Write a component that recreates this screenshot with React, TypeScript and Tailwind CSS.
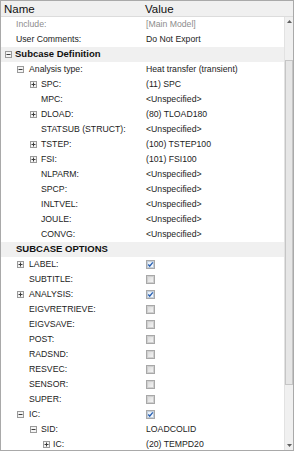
import React from "react";

type Row = {
  name: string;
  value?: string;
  level: number;
  box?: "+" | "-";
  group?: boolean;
  muted?: boolean;
  check?: boolean;
};

const rows: Row[] = [
  { name: "Include:", value: "[Main Model]", level: 0, muted: true },
  { name: "User Comments:", value: "Do Not Export", level: 0 },
  { name: "Subcase Definition", level: 0, box: "-", group: true },
  { name: "Analysis type:", value: "Heat transfer (transient)", level: 1, box: "-" },
  { name: "SPC:", value: "(11) SPC", level: 2, box: "+" },
  { name: "MPC:", value: "<Unspecified>", level: 2 },
  { name: "DLOAD:", value: "(80) TLOAD180", level: 2, box: "+" },
  { name: "STATSUB (STRUCT):", value: "<Unspecified>", level: 2 },
  { name: "TSTEP:", value: "(100) TSTEP100", level: 2, box: "+" },
  { name: "FSI:", value: "(101) FSI100", level: 2, box: "+" },
  { name: "NLPARM:", value: "<Unspecified>", level: 2 },
  { name: "SPCP:", value: "<Unspecified>", level: 2 },
  { name: "INLTVEL:", value: "<Unspecified>", level: 2 },
  { name: "JOULE:", value: "<Unspecified>", level: 2 },
  { name: "CONVG:", value: "<Unspecified>", level: 2 },
  { name: "SUBCASE OPTIONS", level: 0, group: true },
  { name: "LABEL:", level: 1, box: "+", check: true },
  { name: "SUBTITLE:", level: 1, check: false },
  { name: "ANALYSIS:", level: 1, box: "+", check: true },
  { name: "EIGVRETRIEVE:", level: 1, check: false },
  { name: "EIGVSAVE:", level: 1, check: false },
  { name: "POST:", level: 1, check: false },
  { name: "RADSND:", level: 1, check: false },
  { name: "RESVEC:", level: 1, check: false },
  { name: "SENSOR:", level: 1, check: false },
  { name: "SUPER:", level: 1, check: false },
  { name: "IC:", level: 1, box: "-", check: true },
  { name: "SID:", value: "LOADCOLID", level: 2, box: "-" },
  { name: "IC:", value: "(20) TEMPD20", level: 3, box: "+" },
];

// left padding of the name cell, with and without an expander box
const boxPad: Record<number, string> = {
  0: "pl-[4px]",
  1: "pl-[16px]",
  2: "pl-[29px]",
  3: "pl-[42px]",
};
const textGap: Record<number, string> = {
  0: "ml-[3px]",
  1: "ml-[5px]",
  2: "ml-[4px]",
  3: "ml-[3px]",
};
const plainPad: Record<number, string> = {
  0: "pl-[15px]",
  1: "pl-[28px]",
  2: "pl-[40px]",
  3: "pl-[52px]",
};

function Expander({ sign }: { sign: "+" | "-" }) {
  return (
    <svg width="7" height="7" viewBox="0 0 7 7" className="shrink-0">
      <rect x="0.5" y="0.5" width="6" height="6" fill="#f4f4f4" stroke="#9a9a9a" />
      <line x1="1.5" y1="3.5" x2="5.5" y2="3.5" stroke="#3c3c3c" />
      {sign === "+" && <line x1="3.5" y1="1.5" x2="3.5" y2="5.5" stroke="#3c3c3c" />}
    </svg>
  );
}

function Check({ on }: { on: boolean }) {
  return (
    <svg width="9" height="9" viewBox="0 0 9 9">
      <defs>
        <linearGradient id={on ? "cbon" : "cboff"} x1="0" y1="0" x2="1" y2="1">
          <stop offset="0" stopColor={on ? "#e6edf5" : "#d9d9d9"} />
          <stop offset="1" stopColor={on ? "#fbfcfe" : "#f6f6f6"} />
        </linearGradient>
      </defs>
      <rect x="0.5" y="0.5" width="8" height="8" fill="#fdfdfd" stroke="#a8a8a8" />
      <rect x="1.5" y="1.5" width="6" height="6" fill={`url(#${on ? "cbon" : "cboff"})`} stroke={on ? "#c3cfdc" : "#cfcfcf"} />
      {on && (
        <path d="M2.2 4.6 L3.7 6.1 L6.8 2.4" fill="none" stroke="#2b63b5" strokeWidth="1.4" />
      )}
    </svg>
  );
}

function TreeRow({ row }: { row: Row }) {
  const pad = row.box ? boxPad[row.level] : plainPad[row.level];
  return (
    <div className={`flex h-[15px] items-center ${row.group ? "bg-[#f0f0f0]" : "bg-white"}`}>
      <div className={`flex w-[145px] shrink-0 items-center ${pad}`}>
        {row.box && <Expander sign={row.box} />}
        <span
          className={`${row.box ? textGap[row.level] : ""} whitespace-nowrap ${
            row.group ? "text-[9.5px] font-bold text-[#111]" : "text-[8.7px]"
          } ${row.muted ? "text-[#8d8d8d]" : "text-[#1c1c1c]"}`}
        >
          {row.name}
        </span>
      </div>
      <div className="flex items-center">
        {row.check !== undefined ? (
          <Check on={row.check} />
        ) : (
          <span className={`whitespace-nowrap text-[8.7px] ${row.muted ? "text-[#8d8d8d]" : "text-[#1c1c1c]"}`}>
            {row.value}
          </span>
        )}
      </div>
    </div>
  );
}

function ScrollBar() {
  return (
    <div className="flex w-[9px] shrink-0 flex-col border-l border-[#e2e2e2] bg-[#f0f0f0]">
      <div className="flex h-[9px] items-center justify-center">
        <svg width="5" height="3" viewBox="0 0 5 3">
          <path d="M0 3 L2.5 0 L5 3 Z" fill="#606060" />
        </svg>
      </div>
      <div className="flex flex-1 flex-col pt-[34px] pb-[56px]">
        <div className="flex-1 border border-[#c5c5c5] bg-[#e6e6e6]" />
      </div>
      <div className="flex h-[9px] items-center justify-center">
        <svg width="5" height="3" viewBox="0 0 5 3">
          <path d="M0 0 L2.5 3 L5 0 Z" fill="#606060" />
        </svg>
      </div>
    </div>
  );
}

export default function App() {
  return (
    <div className="flex h-[451px] w-[294px] flex-col overflow-hidden border border-[#a9a9a9] bg-white font-['Liberation_Sans',Arial,sans-serif]">
      <div className="flex h-[16px] shrink-0 items-center border-b border-[#dcdcdc] bg-[#f0f0f0] pt-[3px] text-[11.5px] text-[#111]">
        <span className="w-[144px] pl-[3px]">Name</span>
        <span>Value</span>
      </div>
      <div className="flex min-h-0 flex-1">
        <div className="flex-1 overflow-hidden">
          {rows.map((row, i) => (
            <TreeRow key={i} row={row} />
          ))}
        </div>
        <ScrollBar />
      </div>
    </div>
  );
}
